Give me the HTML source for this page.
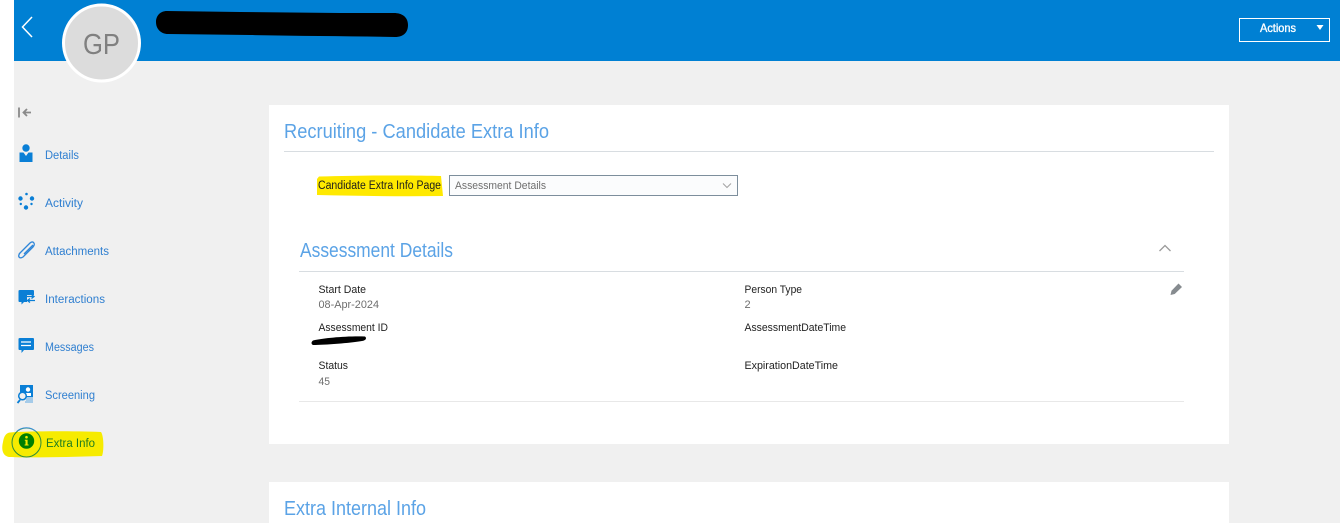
<!DOCTYPE html>
<html><head><meta charset="utf-8"><title>Candidate Extra Info</title>
<style>
html,body{margin:0;padding:0;background:#fff;width:1340px;height:523px;overflow:hidden}
svg{display:block}
text{font-family:"Liberation Sans",sans-serif;font-size:11px}
.nav{fill:#2f7fd0;font-size:11.500px}
.h{fill:#5ba3e6;font-size:20px}
.lab{fill:#222;font-size:11px}
.val{fill:#6e6e6e;font-size:11px}
</style></head><body>
<svg width="1340" height="523" viewBox="0 0 1340 523" xmlns="http://www.w3.org/2000/svg">
<rect width="1340" height="523" fill="#fff"/>
<rect x="14" y="0" width="1326" height="523" fill="#f0f0f0"/>
<rect x="14" y="0" width="1326" height="61" fill="#0080d3"/>
<path d="M32 17 L22.500 27 L32 37" fill="none" stroke="#fff" stroke-width="1.500"/>
<circle cx="101.500" cy="43" r="38" fill="#dcdcdc" stroke="#fff" stroke-width="3"/>
<text x="83" y="54" style="font-size:29px" fill="#808080" textLength="37" lengthAdjust="spacingAndGlyphs">GP</text>
<path d="M167 11 C 160 11 156 16 156 22 C 156 29 161 34 168 34 L 250 35 C 300 36 350 36 395 37 C 404 37 408 32 408 25 C 408 17 402 13 394 13 L 340 13 L 240 12 Z" fill="#000"/>
<rect x="1239.500" y="18.500" width="90" height="23" fill="none" stroke="#fff" stroke-width="1"/>
<text x="1260" y="32" style="font-size:12px;stroke:#fff;stroke-width:.35" fill="#fff" textLength="36" lengthAdjust="spacingAndGlyphs">Actions</text>
<path d="M1316.500 25 L1323.500 25 L1320 30 Z" fill="#fff"/>

<path d="M19 107.500 V117.500" stroke="#8a8a8a" stroke-width="1.800"/>
<path d="M31 112.500 H24 M27 109 L23.500 112.500 L27 116" fill="none" stroke="#8a8a8a" stroke-width="1.800"/>

<circle cx="26" cy="148" r="3.700" fill="#0a7fd6"/>
<path d="M19.500 152.500 H23.500 L26 156 L28.500 152.500 H32.500 V162 H19.500 Z" fill="#0a7fd6"/>
<text class="nav" x="45" y="159" textLength="34" lengthAdjust="spacingAndGlyphs">Details</text>

<g fill="#0a7fd6"><circle cx="20.500" cy="198.500" r="2.200"/><circle cx="32" cy="198.500" r="2.200"/><circle cx="26" cy="207.500" r="2.200"/><circle cx="26.500" cy="194" r="1.300"/><circle cx="20.800" cy="204" r="1.200"/><circle cx="31.500" cy="204" r="1.200"/></g>
<text class="nav" x="45" y="207" textLength="38" lengthAdjust="spacingAndGlyphs">Activity</text>

<path d="M19 254 L30 243 C33 240 36 244 33 247 L23 257 C20 259 17 257 20 253 L29 244 M24 254 L33 245" fill="none" stroke="#2f86d8" stroke-width="1.300"/>
<text class="nav" x="45" y="255" textLength="64" lengthAdjust="spacingAndGlyphs">Attachments</text>

<path d="M18.500 291 Q18.500 290 20 290 H33 Q34 290 34 291 V295 H27 V302 H24 L21.500 304.500 V302 H20 Q18.500 302 18.500 301 Z" fill="#0a7fd6"/>
<path d="M27 296.500 H33.500 M31.500 294.500 L34 296.500 L31.500 298.500 M35 300.500 H28 M30 298.500 L27.500 300.500 L30 302.500" fill="none" stroke="#0a7fd6" stroke-width="1.300"/>
<text class="nav" x="45" y="303" textLength="60" lengthAdjust="spacingAndGlyphs">Interactions</text>

<path d="M20 338 H33 Q34 338 34 339 V349 Q34 350 33 350 H24 L21.500 353 V350 H20 Q18.500 350 18.500 349 V339 Q18.500 338 20 338 Z" fill="#0a7fd6"/>
<path d="M21 342 H31 M21 345.500 H31" stroke="#fff" stroke-width="1.200"/>
<text class="nav" x="45" y="351" textLength="49" lengthAdjust="spacingAndGlyphs">Messages</text>

<rect x="20" y="385" width="13" height="12" fill="#0a7fd6"/>
<circle cx="28" cy="389.500" r="2.200" fill="#fff"/>
<path d="M25 393 H31 V396 H25 Z" fill="#fff"/>
<path d="M26 398 H33 M26 400 H33 M25 402 H33" stroke="#5aa6e2" stroke-width="1.100"/>
<circle cx="22.500" cy="396" r="3.800" fill="#f0f0f0" stroke="#0a7fd6" stroke-width="1.500"/>
<path d="M20 400 L17.500 403" stroke="#0a7fd6" stroke-width="1.800"/>
<text class="nav" x="45" y="399" textLength="50" lengthAdjust="spacingAndGlyphs">Screening</text>

<path d="M10 432.500 C 30 431 70 431 101 432 C 104 436 104 452 102 456 C 70 457 30 458 9 457 C 3 456 1 450 3 442 C 4 436 6 433 10 432.500 Z" fill="#f6eb00"/>
<circle cx="26.500" cy="442.500" r="14.500" fill="none" stroke="#2e8c3a" stroke-width="1"/>
<path d="M17 431 A14.500 14.500 0 0 1 36 431.500" fill="none" stroke="#3b90d8" stroke-width="1"/>
<circle cx="26.500" cy="441" r="7.700" fill="#007f00"/>
<circle cx="26.500" cy="437.200" r="1.300" fill="#f6eb00"/>
<path d="M24.800 439.700 H27.600 V444.500 H28.600 V445.500 H24.600 V444.500 H25.500 V440.700 H24.800 Z" fill="#f6eb00"/>
<text x="46" y="447" style="font-size:11.500px" fill="#1f7d1f" textLength="49" lengthAdjust="spacingAndGlyphs">Extra Info</text>

<rect x="269" y="105" width="960" height="339" fill="#fff"/>
<rect x="269" y="482" width="960" height="41" fill="#fff"/>
<text class="h" x="284" y="138" textLength="265" lengthAdjust="spacingAndGlyphs">Recruiting - Candidate Extra Info</text>
<rect x="284" y="151" width="930" height="1" fill="#d8dde1"/>

<path d="M319 176.500 C 360 175.500 410 175 441 176 L443 196 C 400 196.500 360 196 317 195 L317 179 Z" fill="#ffe900"/>
<text x="318" y="189" style="font-size:11.500px" fill="#1c1c1c" textLength="123" lengthAdjust="spacingAndGlyphs">Candidate Extra Info Page</text>
<rect x="449.500" y="175.500" width="288" height="20" fill="#fbfcfd" stroke="#7d8e9c" stroke-width="1"/>
<text x="455" y="189" style="font-size:11px" fill="#6e6e6e" textLength="91" lengthAdjust="spacingAndGlyphs">Assessment Details</text>
<path d="M723 183.500 L727 187.500 L731 183.500" fill="none" stroke="#a5a5a5" stroke-width="1.100"/>

<text class="h" x="300" y="257" textLength="153" lengthAdjust="spacingAndGlyphs">Assessment Details</text>
<rect x="299" y="271" width="885" height="1" fill="#d8dde1"/>
<path d="M1159.500 251 L1165 245.500 L1170.500 251" fill="none" stroke="#9a9a9a" stroke-width="1.300"/>
<path d="M1170.500 295 L1171.500 290.800 L1178.500 283.500 L1182 287 L1174.700 294 Z" fill="#868b8f"/>

<text class="lab" x="318.500" y="293" textLength="47.500" lengthAdjust="spacingAndGlyphs">Start Date</text>
<text class="val" x="318.500" y="308" textLength="60.500" lengthAdjust="spacingAndGlyphs">08-Apr-2024</text>
<text class="lab" x="318.500" y="331" textLength="69.500" lengthAdjust="spacingAndGlyphs">Assessment ID</text>
<path d="M313 340.500 C 325 338 345 336 365 336.500 C 367 338 366 340.500 362 341 C 350 343 325 345 313 345 C 311 344 311 342 313 340.500 Z" fill="#000"/>
<text class="lab" x="318.500" y="369" textLength="29.500" lengthAdjust="spacingAndGlyphs">Status</text>
<text class="val" x="318.500" y="385" textLength="11.500" lengthAdjust="spacingAndGlyphs">45</text>
<text class="lab" x="744.500" y="293" textLength="57.500" lengthAdjust="spacingAndGlyphs">Person Type</text>
<text class="val" x="744.500" y="308">2</text>
<text class="lab" x="744.500" y="331" textLength="101.500" lengthAdjust="spacingAndGlyphs">AssessmentDateTime</text>
<text class="lab" x="744.500" y="369" textLength="93.500" lengthAdjust="spacingAndGlyphs">ExpirationDateTime</text>
<rect x="299" y="401" width="885" height="1" fill="#e8e8e8"/>

<text class="h" x="284" y="515" textLength="142" lengthAdjust="spacingAndGlyphs">Extra Internal Info</text>
</svg>
</body></html>
